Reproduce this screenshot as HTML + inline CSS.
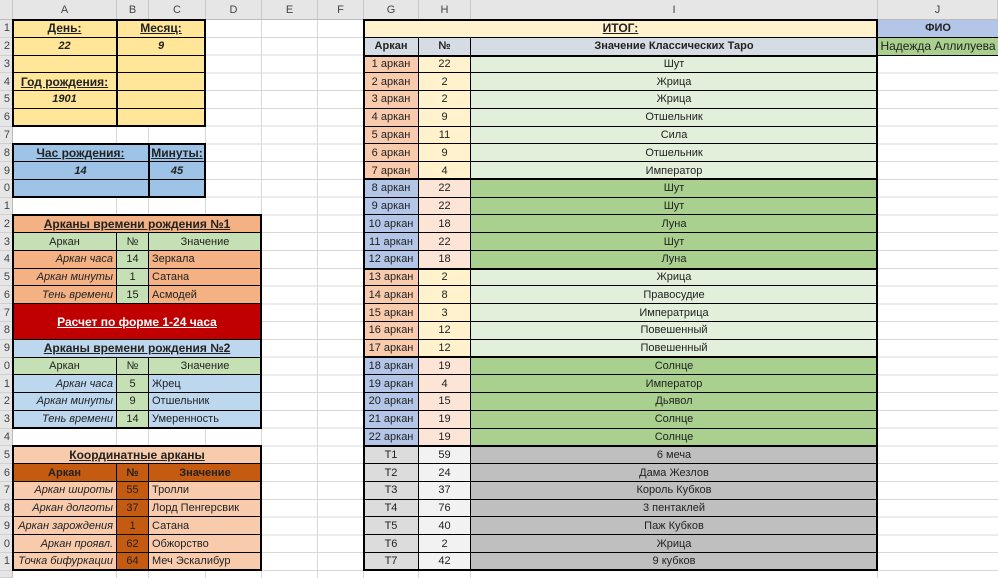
<!DOCTYPE html>
<html><head><meta charset="utf-8"><style>
body{margin:0;width:998px;height:578px;overflow:hidden;background:#fff;font-family:"Liberation Sans",Calibri,sans-serif;font-size:11px;color:#222}
.g{position:relative;display:grid;width:998px;height:578px;grid-template-columns:13px 104px 32px 57px 56px 56px 46px 55px 52px 407px 120px;grid-template-rows:20px repeat(31,17.77px) 1fr;
background-image:repeating-linear-gradient(to bottom,transparent 0 16.77px,#d8d8d8 16.77px 17.77px);background-position:0 20px;background-repeat:repeat-y}
.v{position:absolute;top:20px;bottom:0;width:1px;background:#d8d8d8}
.h{background:#e6e6e6;color:#444;display:flex;align-items:center;justify-content:center;border-right:1px solid #c8c8c8;border-bottom:1px solid #bbb;font-size:11px}
.rn{background:#e6e6e6;color:#444;display:flex;align-items:center;justify-content:flex-end;border-bottom:1px solid #d0d0d0;border-right:1px solid #bbb;font-size:11px;overflow:hidden;padding-right:2px;box-sizing:border-box}
.c{display:flex;align-items:center;justify-content:center;overflow:hidden;white-space:nowrap;border-right:1px solid #000;border-bottom:1px solid #000;box-sizing:border-box;z-index:1}
.l{justify-content:flex-start;padding-left:3px}.r{justify-content:flex-end;padding-right:3px}
.b{font-weight:bold}.u{text-decoration:underline}.i{font-style:italic}
.bu{font-weight:bold;text-decoration:underline;font-size:12px}
.t{border:2px solid #000;z-index:3;pointer-events:none;margin:-1px 0 0 -1px}
.y{background:#ffe699}.bl{background:#9dc3e6}.sa{background:#f4b183}.gr{background:#c5e0b4}.lb{background:#bdd7ee}.pe{background:#f8cbad}.dk{background:#c55a11}
.s1{background:#f8cbad}.s2{background:#fff2cc}.s3{background:#e2efda}.b1{background:#b4c6e7}.b2{background:#fce4d6}.b3{background:#a9d08e}.q1{background:#dcdcdc}.q2{background:#f2f2f2}.q3{background:#bfbfbf}
</style></head><body><div class="g">
<div class="v" style="left:116px"></div><div class="v" style="left:148px"></div><div class="v" style="left:205px"></div><div class="v" style="left:261px"></div><div class="v" style="left:317px"></div><div class="v" style="left:363px"></div><div class="v" style="left:418px"></div><div class="v" style="left:470px"></div><div class="v" style="left:877px"></div>
<div class="h" style="grid-area:1/1"></div><div class="h" style="grid-area:1/2">A</div><div class="h" style="grid-area:1/3">B</div><div class="h" style="grid-area:1/4">C</div><div class="h" style="grid-area:1/5">D</div><div class="h" style="grid-area:1/6">E</div><div class="h" style="grid-area:1/7">F</div><div class="h" style="grid-area:1/8">G</div><div class="h" style="grid-area:1/9">H</div><div class="h" style="grid-area:1/10">I</div><div class="h" style="grid-area:1/11">J</div>
<div class="rn" style="grid-area:2/1">1</div><div class="rn" style="grid-area:3/1">2</div><div class="rn" style="grid-area:4/1">3</div><div class="rn" style="grid-area:5/1">4</div><div class="rn" style="grid-area:6/1">5</div><div class="rn" style="grid-area:7/1">6</div><div class="rn" style="grid-area:8/1">7</div><div class="rn" style="grid-area:9/1">8</div><div class="rn" style="grid-area:10/1">9</div><div class="rn" style="grid-area:11/1">0</div><div class="rn" style="grid-area:12/1">1</div><div class="rn" style="grid-area:13/1">2</div><div class="rn" style="grid-area:14/1">3</div><div class="rn" style="grid-area:15/1">4</div><div class="rn" style="grid-area:16/1">5</div><div class="rn" style="grid-area:17/1">6</div><div class="rn" style="grid-area:18/1">7</div><div class="rn" style="grid-area:19/1">8</div><div class="rn" style="grid-area:20/1">9</div><div class="rn" style="grid-area:21/1">0</div><div class="rn" style="grid-area:22/1">1</div><div class="rn" style="grid-area:23/1">2</div><div class="rn" style="grid-area:24/1">3</div><div class="rn" style="grid-area:25/1">4</div><div class="rn" style="grid-area:26/1">5</div><div class="rn" style="grid-area:27/1">6</div><div class="rn" style="grid-area:28/1">7</div><div class="rn" style="grid-area:29/1">8</div><div class="rn" style="grid-area:30/1">9</div><div class="rn" style="grid-area:31/1">0</div><div class="rn" style="grid-area:32/1">1</div><div class="rn" style="grid-area:33/1"></div>

<!-- block 1 -->
<div class="c y bu" style="grid-area:2/2">День:</div><div class="c y bu" style="grid-area:2/3/3/5">Месяц:</div>
<div class="c y b i" style="grid-area:3/2">22</div><div class="c y b i" style="grid-area:3/3/4/5">9</div>
<div class="c y" style="grid-area:4/2"></div><div class="c y" style="grid-area:4/3/5/5"></div>
<div class="c y bu" style="grid-area:5/2">Год рождения:</div><div class="c y" style="grid-area:5/3/6/5"></div>
<div class="c y b i" style="grid-area:6/2">1901</div><div class="c y" style="grid-area:6/3/7/5"></div>
<div class="c y" style="grid-area:7/2"></div><div class="c y" style="grid-area:7/3/8/5"></div>
<div class="t" style="grid-area:2/2/8/5"></div><div class="t" style="grid-area:2/3/8/5;border-left-width:2px"></div>
<!-- block 2 -->
<div class="c bl bu" style="grid-area:9/2/10/4">Час рождения:</div><div class="c bl bu" style="grid-area:9/4">Минуты:</div>
<div class="c bl b i" style="grid-area:10/2/11/4">14</div><div class="c bl b i" style="grid-area:10/4">45</div>
<div class="c bl" style="grid-area:11/2/12/4"></div><div class="c bl" style="grid-area:11/4"></div>
<div class="t" style="grid-area:9/2/12/5"></div><div class="t" style="grid-area:9/4/12/5"></div>
<!-- block 3 -->
<div class="c sa bu" style="grid-area:13/2/14/6">Арканы времени рождения №1</div>
<div class="c gr" style="grid-area:14/2">Аркан</div><div class="c gr" style="grid-area:14/3">№</div><div class="c gr" style="grid-area:14/4/15/6">Значение</div>
<div class="c sa i r" style="grid-area:15/2">Аркан часа</div><div class="c gr" style="grid-area:15/3">14</div><div class="c sa l" style="grid-area:15/4/16/6">Зеркала</div>
<div class="c sa i r" style="grid-area:16/2">Аркан минуты</div><div class="c gr" style="grid-area:16/3">1</div><div class="c sa l" style="grid-area:16/4/17/6">Сатана</div>
<div class="c sa i r" style="grid-area:17/2">Тень времени</div><div class="c gr" style="grid-area:17/3">15</div><div class="c sa l" style="grid-area:17/4/18/6">Асмодей</div>
<div class="c bu" style="grid-area:18/2/20/6;background:#c00000;color:#fff">Расчет по форме 1-24 часа</div>
<div class="c lb bu" style="grid-area:20/2/21/6">Арканы времени рождения №2</div>
<div class="c gr" style="grid-area:21/2">Аркан</div><div class="c gr" style="grid-area:21/3">№</div><div class="c gr" style="grid-area:21/4/22/6">Значение</div>
<div class="c lb i r" style="grid-area:22/2">Аркан часа</div><div class="c gr" style="grid-area:22/3">5</div><div class="c lb l" style="grid-area:22/4/23/6">Жрец</div>
<div class="c lb i r" style="grid-area:23/2">Аркан минуты</div><div class="c gr" style="grid-area:23/3">9</div><div class="c lb l" style="grid-area:23/4/24/6">Отшельник</div>
<div class="c lb i r" style="grid-area:24/2">Тень времени</div><div class="c gr" style="grid-area:24/3">14</div><div class="c lb l" style="grid-area:24/4/25/6">Умеренность</div>
<div class="t" style="grid-area:13/2/25/6"></div>
<!-- block 4 -->
<div class="c pe bu" style="grid-area:26/2/27/6">Координатные арканы</div>
<div class="c dk b" style="grid-area:27/2">Аркан</div><div class="c dk b" style="grid-area:27/3">№</div><div class="c dk b" style="grid-area:27/4/28/6">Значение</div>
<div class="c pe i r" style="grid-area:28/2">Аркан широты</div><div class="c dk" style="grid-area:28/3">55</div><div class="c pe l" style="grid-area:28/4/29/6">Тролли</div>
<div class="c pe i r" style="grid-area:29/2">Аркан долготы</div><div class="c dk" style="grid-area:29/3">37</div><div class="c pe l" style="grid-area:29/4/30/6">Лорд Пенгерсвик</div>
<div class="c pe i r" style="grid-area:30/2">Аркан зарождения</div><div class="c dk" style="grid-area:30/3">1</div><div class="c pe l" style="grid-area:30/4/31/6">Сатана</div>
<div class="c pe i r" style="grid-area:31/2">Аркан проявл.</div><div class="c dk" style="grid-area:31/3">62</div><div class="c pe l" style="grid-area:31/4/32/6">Обжорство</div>
<div class="c pe i r" style="grid-area:32/2">Точка бифуркации</div><div class="c dk" style="grid-area:32/3">64</div><div class="c pe l" style="grid-area:32/4/33/6">Меч Эскалибур</div>
<div class="t" style="grid-area:26/2/33/6"></div>

<!-- right -->
<div class="c bu" style="grid-area:2/8/3/11;background:#fff2cc">ИТОГ:</div>
<div class="c b" style="grid-area:2/11;background:#b4c6e7;border-right:none">ФИО</div>
<div class="c b" style="grid-area:3/8;background:#d6dce4">Аркан</div><div class="c b" style="grid-area:3/9;background:#d6dce4">№</div><div class="c b" style="grid-area:3/10;background:#d6dce4">Значение Классических Таро</div>
<div class="c" style="grid-area:3/11;background:#a9d08e;border-right:none;font-size:12px">Надежда Аллилуева</div>

<div class="c s1" style="grid-area:4/8">1 аркан</div><div class="c s2" style="grid-area:4/9">22</div><div class="c s3" style="grid-area:4/10">Шут</div>
<div class="c s1" style="grid-area:5/8">2 аркан</div><div class="c s2" style="grid-area:5/9">2</div><div class="c s3" style="grid-area:5/10">Жрица</div>
<div class="c s1" style="grid-area:6/8">3 аркан</div><div class="c s2" style="grid-area:6/9">2</div><div class="c s3" style="grid-area:6/10">Жрица</div>
<div class="c s1" style="grid-area:7/8">4 аркан</div><div class="c s2" style="grid-area:7/9">9</div><div class="c s3" style="grid-area:7/10">Отшельник</div>
<div class="c s1" style="grid-area:8/8">5 аркан</div><div class="c s2" style="grid-area:8/9">11</div><div class="c s3" style="grid-area:8/10">Сила</div>
<div class="c s1" style="grid-area:9/8">6 аркан</div><div class="c s2" style="grid-area:9/9">9</div><div class="c s3" style="grid-area:9/10">Отшельник</div>
<div class="c s1" style="grid-area:10/8">7 аркан</div><div class="c s2" style="grid-area:10/9">4</div><div class="c s3" style="grid-area:10/10">Император</div>
<div class="c b1" style="grid-area:11/8">8 аркан</div><div class="c b2" style="grid-area:11/9">22</div><div class="c b3" style="grid-area:11/10">Шут</div>
<div class="c b1" style="grid-area:12/8">9 аркан</div><div class="c b2" style="grid-area:12/9">22</div><div class="c b3" style="grid-area:12/10">Шут</div>
<div class="c b1" style="grid-area:13/8">10 аркан</div><div class="c b2" style="grid-area:13/9">18</div><div class="c b3" style="grid-area:13/10">Луна</div>
<div class="c b1" style="grid-area:14/8">11 аркан</div><div class="c b2" style="grid-area:14/9">22</div><div class="c b3" style="grid-area:14/10">Шут</div>
<div class="c b1" style="grid-area:15/8">12 аркан</div><div class="c b2" style="grid-area:15/9">18</div><div class="c b3" style="grid-area:15/10">Луна</div>
<div class="c s1" style="grid-area:16/8">13 аркан</div><div class="c s2" style="grid-area:16/9">2</div><div class="c s3" style="grid-area:16/10">Жрица</div>
<div class="c s1" style="grid-area:17/8">14 аркан</div><div class="c s2" style="grid-area:17/9">8</div><div class="c s3" style="grid-area:17/10">Правосудие</div>
<div class="c s1" style="grid-area:18/8">15 аркан</div><div class="c s2" style="grid-area:18/9">3</div><div class="c s3" style="grid-area:18/10">Императрица</div>
<div class="c s1" style="grid-area:19/8">16 аркан</div><div class="c s2" style="grid-area:19/9">12</div><div class="c s3" style="grid-area:19/10">Повешенный</div>
<div class="c s1" style="grid-area:20/8">17 аркан</div><div class="c s2" style="grid-area:20/9">12</div><div class="c s3" style="grid-area:20/10">Повешенный</div>
<div class="c b1" style="grid-area:21/8">18 аркан</div><div class="c b2" style="grid-area:21/9">19</div><div class="c b3" style="grid-area:21/10">Солнце</div>
<div class="c b1" style="grid-area:22/8">19 аркан</div><div class="c b2" style="grid-area:22/9">4</div><div class="c b3" style="grid-area:22/10">Император</div>
<div class="c b1" style="grid-area:23/8">20 аркан</div><div class="c b2" style="grid-area:23/9">15</div><div class="c b3" style="grid-area:23/10">Дьявол</div>
<div class="c b1" style="grid-area:24/8">21 аркан</div><div class="c b2" style="grid-area:24/9">19</div><div class="c b3" style="grid-area:24/10">Солнце</div>
<div class="c b1" style="grid-area:25/8">22 аркан</div><div class="c b2" style="grid-area:25/9">19</div><div class="c b3" style="grid-area:25/10">Солнце</div>
<div class="c q1" style="grid-area:26/8">T1</div><div class="c q2" style="grid-area:26/9">59</div><div class="c q3" style="grid-area:26/10">6 меча</div>
<div class="c q1" style="grid-area:27/8">T2</div><div class="c q2" style="grid-area:27/9">24</div><div class="c q3" style="grid-area:27/10">Дама Жезлов</div>
<div class="c q1" style="grid-area:28/8">T3</div><div class="c q2" style="grid-area:28/9">37</div><div class="c q3" style="grid-area:28/10">Король Кубков</div>
<div class="c q1" style="grid-area:29/8">T4</div><div class="c q2" style="grid-area:29/9">76</div><div class="c q3" style="grid-area:29/10">3 пентаклей</div>
<div class="c q1" style="grid-area:30/8">T5</div><div class="c q2" style="grid-area:30/9">40</div><div class="c q3" style="grid-area:30/10">Паж Кубков</div>
<div class="c q1" style="grid-area:31/8">T6</div><div class="c q2" style="grid-area:31/9">2</div><div class="c q3" style="grid-area:31/10">Жрица</div>
<div class="c q1" style="grid-area:32/8">T7</div><div class="c q2" style="grid-area:32/9">42</div><div class="c q3" style="grid-area:32/10">9 кубков</div>
<div class="t" style="grid-area:2/8/33/11"></div>
<div class="t" style="grid-area:4/8/11/11;border-width:2px 0 2px 0"></div>
<div class="t" style="grid-area:16/8/21/11;border-width:2px 0 2px 0"></div>
<div class="t" style="grid-area:26/8/27/11;border-width:2px 0 0 0"></div>
</div></body></html>
